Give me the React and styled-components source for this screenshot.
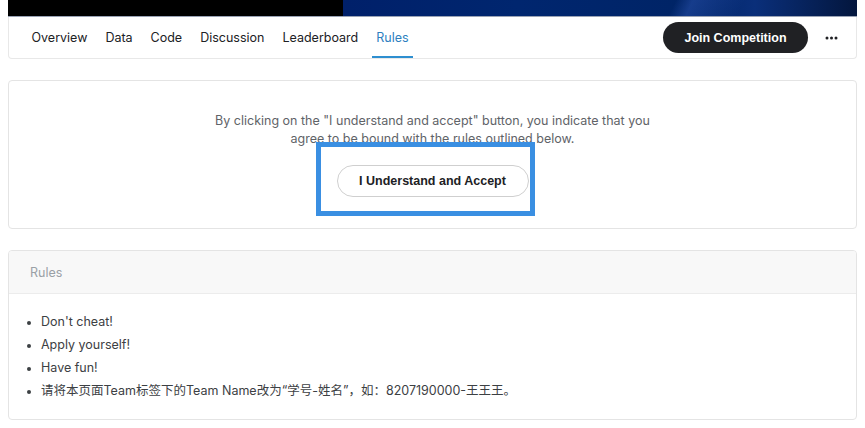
import React from 'react';
import styled, {createGlobalStyle} from 'styled-components';


// Styles
const GlobalStyle = createGlobalStyle`
    html, body{
        margin:0;
        padding:0;
        background-color:#fff;
    }
    body{
        font-family:Inter, "Noto Sans CJK SC", sans-serif;
        color:#202124;
    }
`
const Page = styled.div`
    display:flex;
    flex-direction:column;
    padding:0 8px;
`
const Banner = styled.div`
    height:16px;
    border-bottom:1px solid #9aa3b5;
    background:
        linear-gradient(115deg, transparent 0 78%, rgba(40,80,170,0.55) 80%, transparent 86%),
        linear-gradient(90deg, #000 0 39.5%, #00206a 39.5%, #00266f 60%, #002466 80%, #0a2f7a 88%, #03163d 100%);
`
const NavCard = styled.div`
    height:41px;
    display:flex;
    align-items:center;
    padding:0 13px 0 18px;
    background-color:#fff;
    border:1px solid #e8e8e8;
    border-top:none;
    border-radius:0 0 4px 4px;
`
const Tabs = styled.nav`
    flex:1;
    height:100%;
    display:flex;
    gap:9px;
`
const Tab = styled.a`
    display:flex;
    align-items:center;
    padding:0 4.5px;
    font-size:12.5px;
    color:${p => p.$active ? '#2e7fbf' : '#202124'};
    box-shadow:${p => p.$active ? 'inset 0 -2px 0 #2e8fd0' : 'none'};
    cursor:pointer;
`
const JoinButton = styled.button`
    height:31px;
    width:145px;
    border:none;
    border-radius:16px;
    color:#fff;
    font-size:12.5px;
    font-weight:700;
    font-family:"Liberation Sans", Arial, sans-serif;
    background-color:#202124;
    cursor:pointer;
`
const MoreButton = styled.button`
    width:24px;
    height:31px;
    margin-left:11px;
    display:flex;
    align-items:center;
    justify-content:center;
    border:none;
    background:none;
    padding:0;
`
const Card = styled.section`
    margin-top:${p => p.$gap}px;
    background-color:#fff;
    border:1px solid #e4e4e4;
    border-radius:4px;
    overflow:hidden;
`
const AcceptBody = styled.div`
    position:relative;
    height:147px;
    display:flex;
    flex-direction:column;
    align-items:center;
    padding-top:31px;
    box-sizing:border-box;
`
const Notice = styled.p`
    margin:0;
    width:445px;
    text-align:center;
    font-size:12.5px;
    line-height:18px;
    color:#5f6368;
`
const AcceptButton = styled.button`
    margin-top:17px;
    width:192px;
    height:32px;
    border:1px solid #cfcfcf;
    border-radius:16px;
    background-color:#fff;
    color:#202124;
    font-size:12.5px;
    font-weight:700;
    font-family:"Liberation Sans", Arial, sans-serif;
    cursor:pointer;
`
const Highlight = styled.div`
    position:absolute;
    left:307px;
    top:61px;
    width:209px;
    height:64px;
    border:5px solid #3a8fe2;
    pointer-events:none;
`
const CardHeader = styled.div`
    height:42px;
    display:flex;
    align-items:center;
    padding:0 21px;
    font-size:12.5px;
    color:#9aa0a6;
    background-color:#f8f8f8;
    border-bottom:1px solid #ececec;
`
const RuleList = styled.ul`
    margin:0;
    padding:19px 0 19px 32px;
    display:flex;
    flex-direction:column;
    gap:5px;
`
const Rule = styled.li`
    font-size:12.5px;
    line-height:18px;
    color:#3c4043;
    &::marker{
        font-size:11px;
    }
`


// Main Function
const rules = [
    "Don't cheat!",
    'Apply yourself!',
    'Have fun!',
    '请将本页面Team标签下的Team Name改为“学号-姓名”，如：8207190000-王王王。'
];

const tabs = ['Overview', 'Data', 'Code', 'Discussion', 'Leaderboard', 'Rules'];

const App = () => {
  return (
    <>
        <GlobalStyle/>
        <Page>
            <Banner/>
            <NavCard>
                <Tabs>
                    {tabs.map(t => <Tab key={t} $active={t === 'Rules'}>{t}</Tab>)}
                </Tabs>
                <JoinButton>Join Competition</JoinButton>
                <MoreButton>
                    <svg width="13" height="4" viewBox="0 0 13 4">
                        <circle cx="2" cy="2" r="1.5" fill="#202124"/>
                        <circle cx="6.5" cy="2" r="1.5" fill="#202124"/>
                        <circle cx="11" cy="2" r="1.5" fill="#202124"/>
                    </svg>
                </MoreButton>
            </NavCard>
            <Card $gap={21}>
                <AcceptBody>
                    <Notice>By clicking on the "I understand and accept" button, you indicate that you agree to be bound with the rules outlined below.</Notice>
                    <AcceptButton>I Understand and Accept</AcceptButton>
                    <Highlight/>
                </AcceptBody>
            </Card>
            <Card $gap={21}>
                <CardHeader>Rules</CardHeader>
                <RuleList>
                    {rules.map(r => <Rule key={r}>{r}</Rule>)}
                </RuleList>
            </Card>
        </Page>
    </>
  )
}


// Export
export default App;
